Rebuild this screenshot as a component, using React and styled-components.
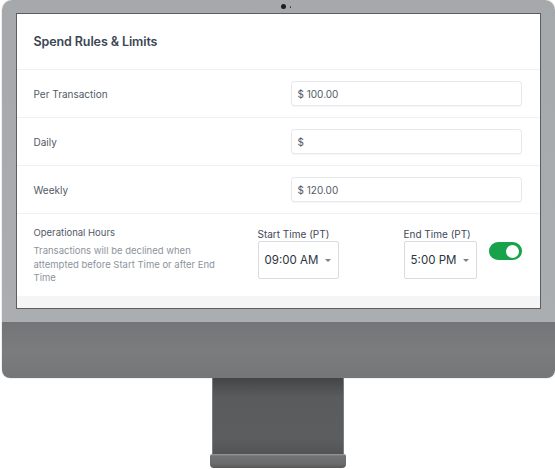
import styled, { createGlobalStyle } from 'styled-components'

const Global = createGlobalStyle`
  html, body { margin: 0; padding: 0; background: #ffffff; }
  body { font-family: Inter, "Noto Sans", "Liberation Sans", sans-serif; }
  * { box-sizing: border-box; }
`

const Page = styled.div`
  width: 555px;
  height: 469px;
  display: flex;
  flex-direction: column;
  align-items: center;
  overflow: hidden;
`

const Bezel = styled.div`
  width: 553px;
  margin-left: 1px;
  border-radius: 10px 10px 8px 8px;
  overflow: hidden;
  box-shadow: 0 0 0 1px rgba(0, 0, 0, 0.06);
`

const Frame = styled.div`
  position: relative;
  background: linear-gradient(180deg, #a6a9ab 0%, #abaeb0 100%);
  padding: 13px 13px 13px 14px;
`

const Camera = styled.span`
  position: absolute;
  top: 4px;
  left: 279px;
  width: 5px;
  height: 5px;
  border-radius: 50%;
  background: #1d1d1f;
  &::after {
    content: '';
    position: absolute;
    left: 9px;
    top: 2px;
    width: 1.5px;
    height: 1.5px;
    border-radius: 50%;
    background: #3a3a3c;
  }
`

const Screen = styled.div`
  width: 525px;
  height: 296px;
  border: 1px solid #5b5d5f;
  background: #ffffff;
  display: flex;
  flex-direction: column;
  overflow: hidden;
`

const Header = styled.div`
  height: 56px;
  padding: 0 17px;
  display: flex;
  align-items: center;
  border-bottom: 1px solid #f0f1f3;
`

const Title = styled.h2`
  margin: 0;
  font-size: 12.5px;
  font-weight: 600;
  color: #3b4554;
  letter-spacing: -0.1px;
`

const Row = styled.div`
  height: 48px;
  padding: 0 18px 0 17px;
  display: flex;
  align-items: center;
  justify-content: space-between;
  border-bottom: 1px solid #f0f1f3;
`

const Label = styled.span`
  font-size: 10px;
  color: #525a66;
`

const Input = styled.div`
  width: 231px;
  height: 25px;
  border: 1px solid #e6e8eb;
  border-radius: 3px;
  box-shadow: 0 1px 1px rgba(0, 0, 0, 0.04);
  padding-left: 6px;
  display: flex;
  align-items: center;
  font-size: 10px;
  color: #525a66;
`

const HoursRow = styled.div`
  height: 82px;
  padding: 12px 18px 0 17px;
  display: flex;
  align-items: flex-start;
`

const HoursInfo = styled.div`
  width: 224px;
  display: flex;
  flex-direction: column;
`

const HoursTitle = styled.span`
  font-size: 9.5px;
  color: #525a66;
  line-height: 13px;
`

const HoursText = styled.p`
  margin: 5px 0 0;
  width: 196px;
  font-size: 9.5px;
  line-height: 13.5px;
  color: #8d939d;
`

const TimeGroup = styled.div`
  width: ${p => p.$w}px;
  display: flex;
  flex-direction: column;
  padding-top: 2px;
`

const TimeLabel = styled.span`
  font-size: 10px;
  color: #404856;
  line-height: 12px;
  margin-bottom: 1px;
`

const Select = styled.div`
  width: ${p => p.$w}px;
  height: 38px;
  border: 1px solid #d8dbe0;
  border-radius: 2px;
  display: flex;
  align-items: center;
  justify-content: center;
  gap: 7px;
  font-size: 11.5px;
  color: #2b3441;
`

const Caret = styled.span`
  width: 0;
  height: 0;
  border-left: 3.5px solid transparent;
  border-right: 3.5px solid transparent;
  border-top: 3.5px solid #7b818a;
  margin-top: 1px;
`

const Toggle = styled.div`
  margin-top: 16px;
  width: 33px;
  height: 18px;
  border-radius: 9px;
  background: #17a24b;
  display: flex;
  align-items: center;
  justify-content: flex-end;
  padding-right: 3px;
  &::after {
    content: '';
    width: 13px;
    height: 13px;
    border-radius: 50%;
    background: #ffffff;
  }
`

const Footer = styled.div`
  flex: 1;
  background: #f5f5f6;
`

const Chin = styled.div`
  height: 56px;
  background: linear-gradient(180deg, #737577 0%, #7a7c7e 50%, #747678 100%);
`

const Neck = styled.div`
  width: 132px;
  height: 76px;
  margin-left: 1px;
  background: linear-gradient(180deg, #444546 0%, #5a5b5c 25%, #5c5d5e 80%, #525354 100%);
  border-left: 1px solid #7c7d7e;
  border-right: 1px solid #7c7d7e;
`

const Foot = styled.div`
  width: 136px;
  height: 14px;
  margin-left: 1px;
  border-radius: 2px 2px 4px 4px;
  background: linear-gradient(180deg, #9a9b9c 0%, #727374 15%, #6a6b6c 70%, #565758 100%);
`

export default function App() {
  return (
    <Page>
      <Global />
      <Bezel>
        <Frame>
          <Camera />
          <Screen>
            <Header>
              <Title>Spend Rules &amp; Limits</Title>
            </Header>
            <Row>
              <Label>Per Transaction</Label>
              <Input>$ 100.00</Input>
            </Row>
            <Row>
              <Label>Daily</Label>
              <Input>$</Input>
            </Row>
            <Row>
              <Label>Weekly</Label>
              <Input>$ 120.00</Input>
            </Row>
            <HoursRow>
              <HoursInfo>
                <HoursTitle>Operational Hours</HoursTitle>
                <HoursText>
                  Transactions will be declined when attempted before Start Time or after End Time
                </HoursText>
              </HoursInfo>
              <TimeGroup $w={146}>
                <TimeLabel>Start Time (PT)</TimeLabel>
                <Select $w={81}>
                  09:00 AM <Caret />
                </Select>
              </TimeGroup>
              <TimeGroup $w={85}>
                <TimeLabel>End Time (PT)</TimeLabel>
                <Select $w={73}>
                  5:00 PM <Caret />
                </Select>
              </TimeGroup>
              <Toggle />
            </HoursRow>
            <Footer />
          </Screen>
        </Frame>
        <Chin />
      </Bezel>
      <Neck />
      <Foot />
    </Page>
  )
}
